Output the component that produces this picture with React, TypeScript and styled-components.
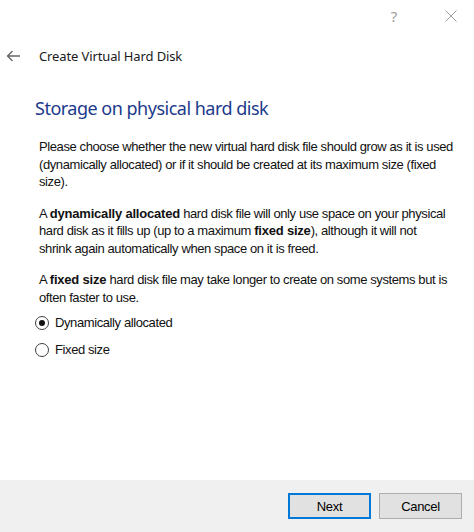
import React from "react";
import styled, { createGlobalStyle } from "styled-components";

const Global = createGlobalStyle`
  html, body { margin: 0; padding: 0; background: #ffffff; }
  #root { width: 474px; height: 532px; }
`;

const Window = styled.div`
  width: 474px;
  height: 532px;
  display: flex;
  flex-direction: column;
  background: #ffffff;
  font-family: "Liberation Sans", Arial, sans-serif;
  color: #000;
`;

const TitleBar = styled.div`
  height: 32px;
  display: flex;
  justify-content: flex-end;
  align-items: center;
  gap: 11px;
`;

const CaptionButton = styled.div`
  width: 46px;
  height: 32px;
  display: flex;
  align-items: center;
  justify-content: center;
  color: #a0a0a0;
  font-family: "Noto Sans", sans-serif;
  font-size: 15px;
`;

const NavRow = styled.div`
  display: flex;
  align-items: center;
  height: 48px;
  padding-left: 6px;
  gap: 18px;
`;

const NavTitle = styled.div`
  font-family: "Noto Sans", sans-serif;
  font-size: 13px;
  letter-spacing: -0.12px;
  color: #1a1a1a;
`;

const Content = styled.div`
  flex: 1;
  padding: 14px 6px 0 35px;
`;

const Heading = styled.h1`
  margin: 0 0 18px 0;
  height: 26px;
  line-height: 28px;
  font-family: "Noto Sans", sans-serif;
  font-weight: 400;
  font-size: 18px;
  letter-spacing: -0.5px;
  color: #1c3a8c;
`;

const TextBlock = styled.div`
  display: flex;
  flex-direction: column;
  gap: 14px;
  padding-left: 4px;
`;

const Para = styled.p`
  margin: 0;
  font-size: 13px;
  letter-spacing: -0.4px;
  line-height: 17.5px;
  color: #111;
`;

const Strong = styled.b`
  font-weight: 700;
  letter-spacing: -0.2px;
`;

const RadioList = styled.div`
  display: flex;
  flex-direction: column;
  gap: 8px;
  margin-top: 7px;
`;

const RadioRow = styled.label`
  display: flex;
  align-items: center;
  gap: 6px;
  font-size: 13px;
  letter-spacing: -0.4px;
  height: 19px;
  color: #111;
`;

const RadioCircle = styled.span<{ $checked?: boolean }>`
  width: 12px;
  height: 12px;
  border: 1px solid #404040;
  border-radius: 50%;
  display: flex;
  align-items: center;
  justify-content: center;
  &::after {
    content: "";
    width: 6px;
    height: 6px;
    border-radius: 50%;
    background: ${(p) => (p.$checked ? "#111" : "transparent")};
  }
`;

const Footer = styled.div`
  height: 52px;
  background: #f0f0f0;
  display: flex;
  justify-content: flex-end;
  align-items: center;
  gap: 8px;
  padding-right: 12px;
`;

const Button = styled.button<{ $default?: boolean }>`
  width: 83px;
  height: 26px;
  background: #e1e1e1;
  border: 1px solid ${(p) => (p.$default ? "#0078d7" : "#adadad")};
  box-shadow: ${(p) => (p.$default ? "inset 0 0 0 1px #0078d7" : "none")};
  font-family: "Liberation Sans", Arial, sans-serif;
  font-size: 13px;
  letter-spacing: -0.3px;
  color: #000;
  padding: 0;
`;

export default function App() {
  return (
    <>
      <Global />
      <Window>
        <TitleBar>
          <CaptionButton>?</CaptionButton>
          <CaptionButton>
            <svg width="12" height="12" viewBox="0 0 12 12">
              <path d="M0.5 0.5 L11.5 11.5 M11.5 0.5 L0.5 11.5" stroke="#a0a0a0" strokeWidth="1" />
            </svg>
          </CaptionButton>
        </TitleBar>
        <NavRow>
          <svg width="15" height="12" viewBox="0 0 15 12">
            <path d="M14 6 H1.5 M6.5 1 L1.5 6 L6.5 11" stroke="#666" strokeWidth="1.3" fill="none" />
          </svg>
          <NavTitle>Create Virtual Hard Disk</NavTitle>
        </NavRow>
        <Content>
          <Heading>Storage on physical hard disk</Heading>
          <TextBlock>
            <Para>
              Please choose whether the new virtual hard disk file should grow as it is used
              <br />
              (dynamically allocated) or if it should be created at its maximum size (fixed
              <br />
              size).
            </Para>
            <Para>
              A <Strong>dynamically allocated</Strong> hard disk file will only use space on your physical
              <br />
              hard disk as it fills up (up to a maximum <Strong>fixed size</Strong>), although it will not
              <br />
              shrink again automatically when space on it is freed.
            </Para>
            <Para>
              A <Strong>fixed size</Strong> hard disk file may take longer to create on some systems but is
              <br />
              often faster to use.
            </Para>
          </TextBlock>
          <RadioList>
            <RadioRow>
              <RadioCircle $checked />
              Dynamically allocated
            </RadioRow>
            <RadioRow>
              <RadioCircle />
              Fixed size
            </RadioRow>
          </RadioList>
        </Content>
        <Footer>
          <Button $default>Next</Button>
          <Button>Cancel</Button>
        </Footer>
      </Window>
    </>
  );
}
